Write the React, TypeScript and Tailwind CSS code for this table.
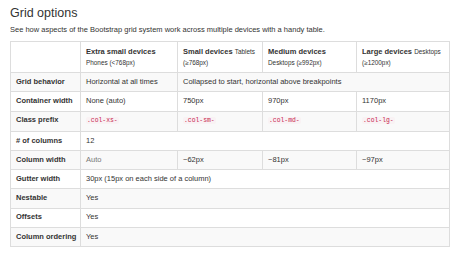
import React from "react";

const sans = { fontFamily: '"Liberation Sans", Arial, sans-serif' };

function Code({ children }: { children: React.ReactNode }) {
  return (
    <code className="rounded-[2px] bg-[#f9f2f4] px-[1px] text-[6.4px] text-[#c7254e] [font-family:'Liberation_Mono',Menlo,monospace]">
      {children}
    </code>
  );
}

const rowTh =
  "border border-[#ddd] px-[5px] py-[3.75px] text-left font-bold whitespace-nowrap align-top";
const td = "border border-[#ddd] px-[5px] py-[3.75px] align-top whitespace-nowrap";

export default function App() {
  return (
    <div
      className="w-[474px] h-[258px] bg-white px-[10px] pt-[6px] text-[#333] text-[7.5px] leading-[10.7px]"
      style={sans}
    >
      <h2 className="text-[12.5px] leading-[14px] font-normal">Grid options</h2>
      <p className="mt-[4.5px] mb-[5.8px]">
        See how aspects of the Bootstrap grid system work across multiple devices with a handy table.
      </p>
      <table className="table-fixed border-collapse w-[439px] border border-[#ddd]">
        <colgroup>
          <col className="w-[70px]" />
          <col className="w-[97px]" />
          <col className="w-[85px]" />
          <col className="w-[94px]" />
          <col className="w-[93px]" />
        </colgroup>
        <thead>
          <tr>
            <th className="border border-[#ddd] px-[5px] py-[4px]"></th>
            <th className="border border-[#ddd] px-[5px] pt-[4px] pb-[4.2px] text-left align-bottom font-bold whitespace-nowrap leading-[11px]">
              Extra small devices
              <br />
              <small className="text-[6.4px] font-normal">Phones (&lt;768px)</small>
            </th>
            <th className="border border-[#ddd] px-[5px] pt-[4px] pb-[4.2px] text-left align-bottom font-bold whitespace-nowrap leading-[11px]">
              Small devices <small className="text-[6.4px] font-normal">Tablets</small>
              <br />
              <small className="text-[6.4px] font-normal">(≥768px)</small>
            </th>
            <th className="border border-[#ddd] px-[5px] pt-[4px] pb-[4.2px] text-left align-bottom font-bold whitespace-nowrap leading-[11px]">
              Medium devices
              <br />
              <small className="text-[6.4px] font-normal">Desktops (≥992px)</small>
            </th>
            <th className="border border-[#ddd] px-[5px] pt-[4px] pb-[4.2px] text-left align-bottom font-bold whitespace-nowrap leading-[11px]">
              Large devices <small className="text-[6.4px] font-normal">Desktops</small>
              <br />
              <small className="text-[6.4px] font-normal">(≥1200px)</small>
            </th>
          </tr>
        </thead>
        <tbody>
          <tr className="bg-[#f9f9f9]">
            <th className={rowTh}>Grid behavior</th>
            <td className={td}>Horizontal at all times</td>
            <td className={td} colSpan={3}>
              Collapsed to start, horizontal above breakpoints
            </td>
          </tr>
          <tr>
            <th className={rowTh}>Container width</th>
            <td className={td}>None (auto)</td>
            <td className={td}>750px</td>
            <td className={td}>970px</td>
            <td className={td}>1170px</td>
          </tr>
          <tr className="bg-[#f9f9f9]">
            <th className={rowTh}>Class prefix</th>
            <td className={td}>
              <Code>.col-xs-</Code>
            </td>
            <td className={td}>
              <Code>.col-sm-</Code>
            </td>
            <td className={td}>
              <Code>.col-md-</Code>
            </td>
            <td className={td}>
              <Code>.col-lg-</Code>
            </td>
          </tr>
          <tr>
            <th className={rowTh}># of columns</th>
            <td className={td} colSpan={4}>12</td>
          </tr>
          <tr className="bg-[#f9f9f9]">
            <th className={rowTh}>Column width</th>
            <td className={td + " text-[#777]"}>Auto</td>
            <td className={td}>~62px</td>
            <td className={td}>~81px</td>
            <td className={td}>~97px</td>
          </tr>
          <tr>
            <th className={rowTh}>Gutter width</th>
            <td className={td} colSpan={4}>
              30px (15px on each side of a column)
            </td>
          </tr>
          <tr className="bg-[#f9f9f9]">
            <th className={rowTh}>Nestable</th>
            <td className={td} colSpan={4}>Yes</td>
          </tr>
          <tr>
            <th className={rowTh}>Offsets</th>
            <td className={td} colSpan={4}>Yes</td>
          </tr>
          <tr className="bg-[#f9f9f9]">
            <th className={rowTh}>Column ordering</th>
            <td className={td} colSpan={4}>Yes</td>
          </tr>
        </tbody>
      </table>
    </div>
  );
}
